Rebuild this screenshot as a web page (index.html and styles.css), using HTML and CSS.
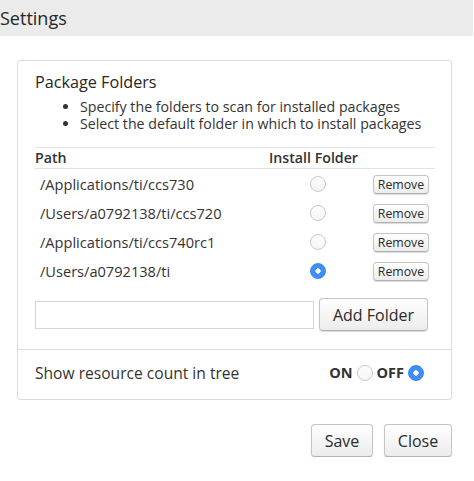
FILE: index.html
```html
<!DOCTYPE html>
<html>
<head>
<meta charset="utf-8">
<link rel="stylesheet" href="styles.css">
</head>
<body>
<div class="header">Settings</div>
<div class="main">
  <div class="panel">
    <div class="section">
      <div class="title">Package Folders</div>
      <ul class="bullets">
        <li>Specify the folders to scan for installed packages</li>
        <li>Select the default folder in which to install packages</li>
      </ul>
      <div class="table">
        <div class="row head">
          <div class="c-path">Path</div>
          <div class="c-inst">Install Folder</div>
          <div class="c-act"></div>
        </div>
        <div class="row">
          <div class="c-path">/Applications/ti/ccs730</div>
          <div class="c-inst center"><input type="radio" name="inst" class="radio"></div>
          <div class="c-act"><button class="btn small">Remove</button></div>
        </div>
        <div class="row">
          <div class="c-path">/Users/a0792138/ti/ccs720</div>
          <div class="c-inst center"><input type="radio" name="inst" class="radio"></div>
          <div class="c-act"><button class="btn small">Remove</button></div>
        </div>
        <div class="row">
          <div class="c-path">/Applications/ti/ccs740rc1</div>
          <div class="c-inst center"><input type="radio" name="inst" class="radio"></div>
          <div class="c-act"><button class="btn small">Remove</button></div>
        </div>
        <div class="row">
          <div class="c-path">/Users/a0792138/ti</div>
          <div class="c-inst center"><input type="radio" name="inst" class="radio" checked></div>
          <div class="c-act"><button class="btn small">Remove</button></div>
        </div>
      </div>
      <div class="add">
        <input type="text" class="text-input">
        <button class="btn large add-btn">Add Folder</button>
      </div>
    </div>
    <div class="section option">
      <span class="opt-label">Show resource count in tree</span>
      <span class="toggle">
        <label class="tlabel">ON</label><input type="radio" name="cnt" class="radio">
        <label class="tlabel">OFF</label><input type="radio" name="cnt" class="radio" checked>
      </span>
    </div>
  </div>
  <div class="footer">
    <button class="btn large save">Save</button>
    <button class="btn large close">Close</button>
  </div>
</div>
</body>
</html>
```
FILE: styles.css
```css
html, body {
  margin: 0;
  padding: 0;
  background: #fff;
}
body {
  font-family: "Open Sans", "DejaVu Sans", sans-serif;
  color: #333;
  width: 474px;
}
.header {
  width: 473px;
  height: 36px;
  line-height: 36px;
  background: #ebebeb;
  font-size: 18px;
  font-weight: 500;
  color: #262626;
  padding-left: 0;
}
.main {
  padding: 24px 22px 0 17px;
}
.panel {
  border: 1px solid #dcdcdc;
  border-radius: 3px;
  width: 433px;
}
.section {
  padding: 10px 16px 18px 17px;
}
.title {
  font-size: 16.2px;
  line-height: 22px;
  font-weight: 500;
  color: #262626;
}
.bullets {
  margin: 5px 0 0 0;
  padding-left: 45px;
  font-size: 14.2px;
  line-height: 17px;
}
.table {
  margin-top: 15px;
  border-top: 1px solid #e2e2e2;
}
.row {
  display: grid;
  grid-template-columns: 234px 97px 69px;
  align-items: center;
  height: 29px;
  font-size: 14.6px;
}
.row.head {
  height: 20px;
  line-height: 20px;
  font-size: 14.2px;
  font-weight: 600;
  border-bottom: 1px solid #e2e2e2;
}
.row .c-path {
  padding-left: 5px;
}
.row.head .c-path {
  padding-left: 0;
}
.center {
  display: flex;
  justify-content: center;
  align-items: center;
}
.c-act {
  display: flex;
  justify-content: flex-end;
  padding-right: 6px;
}
.radio {
  appearance: none;
  -webkit-appearance: none;
  margin: 0;
  width: 16px;
  height: 16px;
  border-radius: 50%;
  border: 1px solid #c8c8c8;
  background: linear-gradient(#fdfdfd, #f5f5f5);
  box-sizing: border-box;
  display: inline-block;
  vertical-align: middle;
}
.radio:checked {
  border: 1px solid #3a87f0;
  background: radial-gradient(circle, #fff 0 2.4px, #3d8ef7 2.9px);
}
.btn {
  font-family: "Open Sans", "DejaVu Sans", sans-serif;
  color: #2a2a2a;
  border: 1px solid #c4c4c4;
  border-bottom-color: #b0b0b0;
  border-radius: 4px;
  background: linear-gradient(#ffffff, #ececec);
  box-shadow: 0 1px 1px rgba(0,0,0,0.15);
  padding: 0;
  cursor: pointer;
}
.btn.small {
  width: 56px;
  height: 19px;
  font-size: 12.3px;
  line-height: 17px;
  margin-top: 1px;
}
.btn.large {
  height: 33px;
  font-size: 16px;
}
.add {
  display: flex;
  align-items: center;
  margin-top: 13px;
  gap: 5px;
}
.text-input {
  width: 279px;
  height: 28px;
  box-sizing: border-box;
  border: 1px solid #d6d6d6;
  margin: 0;
  padding: 0 4px;
  font-size: 14px;
}
.add-btn {
  width: 109px;
  height: 34px;
}
.option {
  border-top: 1px solid #dcdcdc;
  display: flex;
  justify-content: space-between;
  align-items: center;
  padding-top: 12px;
  padding-bottom: 15px;
  padding-right: 27px;
  font-size: 15.6px;
  line-height: 22px;
}
.toggle {
  display: flex;
  align-items: center;
  gap: 4px;
}
.tlabel {
  font-weight: 700;
  font-size: 14.5px;
}
.footer {
  display: flex;
  justify-content: flex-end;
  gap: 11px;
  margin-top: 24px;
  width: 435px;
}
.save {
  width: 62px;
}
.close {
  width: 68px;
}
```
